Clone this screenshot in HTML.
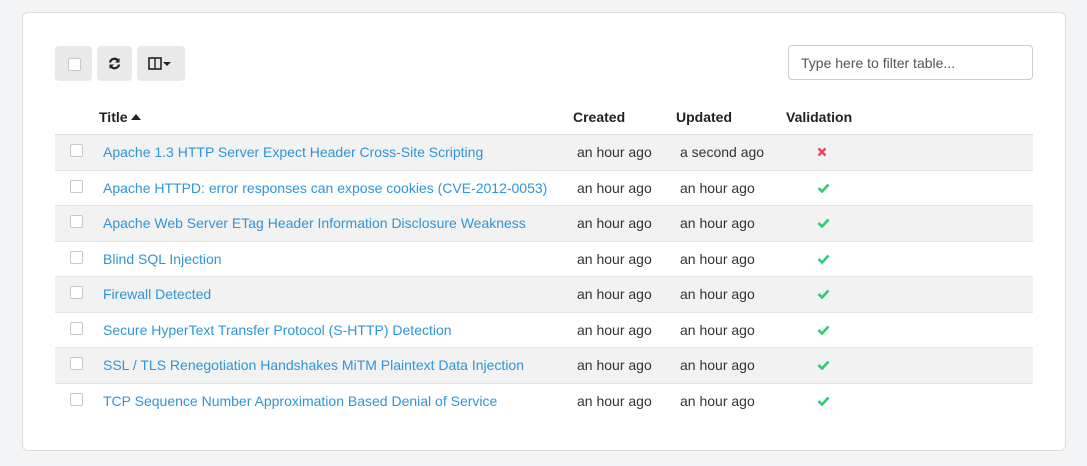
<!DOCTYPE html>
<html><head><style>
body{margin:0;background:#f3f4f6;font-family:"Liberation Sans",sans-serif;font-size:14px;color:#333;width:1087px;height:466px;overflow:hidden}
.panel{position:absolute;left:22px;top:12px;width:1042px;height:437px;background:#fff;border:1px solid #dcdcdc;border-radius:6px}
.btn{position:absolute;top:33px;height:35px;background:#e9e9e9;border-radius:4px}
.cb{display:inline-block;width:11px;height:11px;border:1px solid #c8c8c8;border-radius:2px;background:#fff}
.filter{position:absolute;left:765px;top:32px;width:245px;height:35px;border:1px solid #ccc;border-radius:4px;box-sizing:border-box;padding:9px 12px;color:#555;font-size:14px}
table{position:absolute;left:32px;top:86px;width:978px;border-collapse:collapse}
th{text-align:left;font-weight:bold;color:#222;height:35px;padding:0;border-bottom:1px solid #ddd;font-size:14px}
td{height:34.5px;padding:0;border-bottom:1px solid #e4e4e4;font-size:14px;color:#333}
td:nth-child(2){padding-left:4px}
tr.s td{background:#f2f2f2}
a{color:#2f95d8;text-decoration:none}
.ok{padding-left:31px}
</style></head><body>
<div class="panel">
 <div class="btn" style="left:32px;width:37px"><span class="cb" style="position:absolute;left:13px;top:12px"></span></div>
 <div class="btn" style="left:74px;width:35px"><svg style="position:absolute;left:11px;top:11px" width="13" height="13" viewBox="0 0 13 13"><path d="M2 5.5A4.5 4.5 0 0 1 10 3.5" stroke="#222" stroke-width="2.2" fill="none"/><path d="M11.5 1v4.5H7z" fill="#222"/><path d="M11 7.5A4.5 4.5 0 0 1 3 9.5" stroke="#222" stroke-width="2.2" fill="none"/><path d="M1.5 12V7.5H6z" fill="#222"/></svg></div>
 <div class="btn" style="left:114px;width:48px"><svg style="position:absolute;left:11px;top:11px" width="28" height="13" viewBox="0 0 28 13"><rect x="1" y="1" width="12" height="11" stroke="#222" stroke-width="1.6" fill="none"/><line x1="7" y1="1" x2="7" y2="12" stroke="#222" stroke-width="1.4"/><path d="M15 5h8l-4 4z" fill="#222"/></svg></div>
 <div class="filter">Type here to filter table...</div>
 <table>
 <tr><th style="width:44px"></th><th style="width:474px">Title <svg width="10" height="6" viewBox="0 0 10 6" style="vertical-align:2px"><path d="M0 6L5 0L10 6z" fill="#222"/></svg></th><th style="width:103px">Created</th><th style="width:110px">Updated</th><th>Validation</th></tr>
 <tr class="s"><td style="padding-left:15px"><span class="cb"></span></td><td><a>Apache 1.3 HTTP Server Expect Header Cross-Site Scripting</a></td><td style="padding-left:4px">an hour ago</td><td style="padding-left:4px">a second ago</td><td class="ok"><svg width="10" height="10" viewBox="0 0 10 10"><path d="M1.5 1.5L8.5 8.5M8.5 1.5L1.5 8.5" stroke="#e8475f" stroke-width="2.6"/></svg></td></tr>
 <tr><td style="padding-left:15px"><span class="cb"></span></td><td><a>Apache HTTPD: error responses can expose cookies (CVE-2012-0053)</a></td><td style="padding-left:4px">an hour ago</td><td style="padding-left:4px">an hour ago</td><td class="ok"><svg width="13" height="10" viewBox="0 0 13 10"><path d="M1.5 5L5 8.5L11.5 1.5" stroke="#2ecc71" stroke-width="2.6" fill="none"/></svg></td></tr>
 <tr class="s"><td style="padding-left:15px"><span class="cb"></span></td><td><a>Apache Web Server ETag Header Information Disclosure Weakness</a></td><td style="padding-left:4px">an hour ago</td><td style="padding-left:4px">an hour ago</td><td class="ok"><svg width="13" height="10" viewBox="0 0 13 10"><path d="M1.5 5L5 8.5L11.5 1.5" stroke="#2ecc71" stroke-width="2.6" fill="none"/></svg></td></tr>
 <tr><td style="padding-left:15px"><span class="cb"></span></td><td><a>Blind SQL Injection</a></td><td style="padding-left:4px">an hour ago</td><td style="padding-left:4px">an hour ago</td><td class="ok"><svg width="13" height="10" viewBox="0 0 13 10"><path d="M1.5 5L5 8.5L11.5 1.5" stroke="#2ecc71" stroke-width="2.6" fill="none"/></svg></td></tr>
 <tr class="s"><td style="padding-left:15px"><span class="cb"></span></td><td><a>Firewall Detected</a></td><td style="padding-left:4px">an hour ago</td><td style="padding-left:4px">an hour ago</td><td class="ok"><svg width="13" height="10" viewBox="0 0 13 10"><path d="M1.5 5L5 8.5L11.5 1.5" stroke="#2ecc71" stroke-width="2.6" fill="none"/></svg></td></tr>
 <tr><td style="padding-left:15px"><span class="cb"></span></td><td><a>Secure HyperText Transfer Protocol (S-HTTP) Detection</a></td><td style="padding-left:4px">an hour ago</td><td style="padding-left:4px">an hour ago</td><td class="ok"><svg width="13" height="10" viewBox="0 0 13 10"><path d="M1.5 5L5 8.5L11.5 1.5" stroke="#2ecc71" stroke-width="2.6" fill="none"/></svg></td></tr>
 <tr class="s"><td style="padding-left:15px"><span class="cb"></span></td><td><a>SSL / TLS Renegotiation Handshakes MiTM Plaintext Data Injection</a></td><td style="padding-left:4px">an hour ago</td><td style="padding-left:4px">an hour ago</td><td class="ok"><svg width="13" height="10" viewBox="0 0 13 10"><path d="M1.5 5L5 8.5L11.5 1.5" stroke="#2ecc71" stroke-width="2.6" fill="none"/></svg></td></tr>
 <tr><td style="padding-left:15px;border-bottom:none"><span class="cb"></span></td><td style="border-bottom:none"><a>TCP Sequence Number Approximation Based Denial of Service</a></td><td style="padding-left:4px;border-bottom:none">an hour ago</td><td style="padding-left:4px;border-bottom:none">an hour ago</td><td class="ok" style="border-bottom:none"><svg width="13" height="10" viewBox="0 0 13 10"><path d="M1.5 5L5 8.5L11.5 1.5" stroke="#2ecc71" stroke-width="2.6" fill="none"/></svg></td></tr>
 </table>
</div>
</body></html>
